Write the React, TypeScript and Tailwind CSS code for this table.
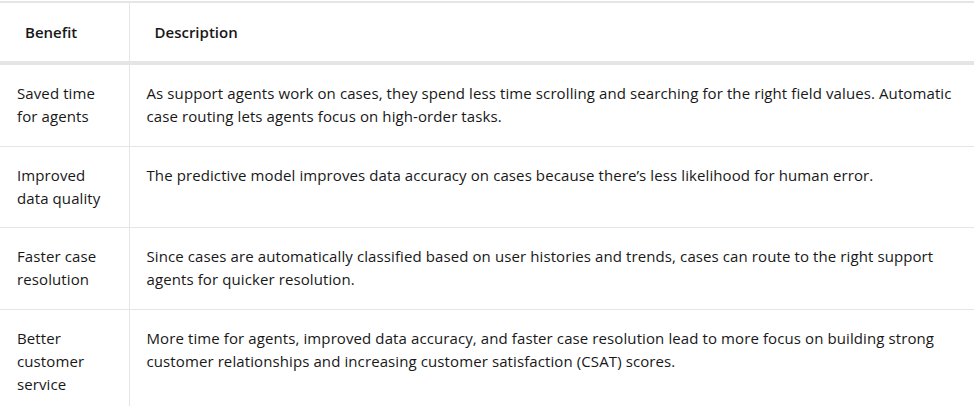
const rows = [
  {
    benefit: "Saved time for agents",
    description:
      "As support agents work on cases, they spend less time scrolling and searching for the right field values. Automatic case routing lets agents focus on high-order tasks.",
  },
  {
    benefit: "Improved data quality",
    description:
      "The predictive model improves data accuracy on cases because there’s less likelihood for human error.",
  },
  {
    benefit: "Faster case resolution",
    description:
      "Since cases are automatically classified based on user histories and trends, cases can route to the right support agents for quicker resolution.",
  },
  {
    benefit: "Better customer service",
    description:
      "More time for agents, improved data accuracy, and faster case resolution lead to more focus on building strong customer relationships and increasing customer satisfaction (CSAT) scores.",
  },
];

export default function App() {
  return (
    <div className="w-[974px] h-[406px] overflow-hidden bg-white pt-[1px] font-['Open_Sans','Noto_Sans',sans-serif] text-[15px] tracking-[0.1px] leading-[23px] text-[#181818]">
      <table className="w-full border-collapse table-fixed">
        <colgroup>
          <col className="w-[129px]" />
          <col />
        </colgroup>
        <thead>
          <tr className="border-t-2 border-b-4 border-[#e5e5e5]">
            <th className="h-[61px] pl-[25px] pr-4 text-left font-semibold tracking-normal border-r border-[#e5e5e5]">Benefit</th>
            <th className="h-[61px] pl-[25px] pr-4 text-left font-semibold tracking-normal">Description</th>
          </tr>
        </thead>
        <tbody>
          {rows.map((r) => (
            <tr key={r.benefit} className="border-b border-[#e5e5e5] align-top">
              <td className="px-[17px] pt-[17px] pb-[17.5px] border-r border-[#e5e5e5]">{r.benefit}</td>
              <td className="pl-[17px] pr-[12px] pt-[17px] pb-[17.5px]">{r.description}</td>
            </tr>
          ))}
        </tbody>
      </table>
    </div>
  );
}
